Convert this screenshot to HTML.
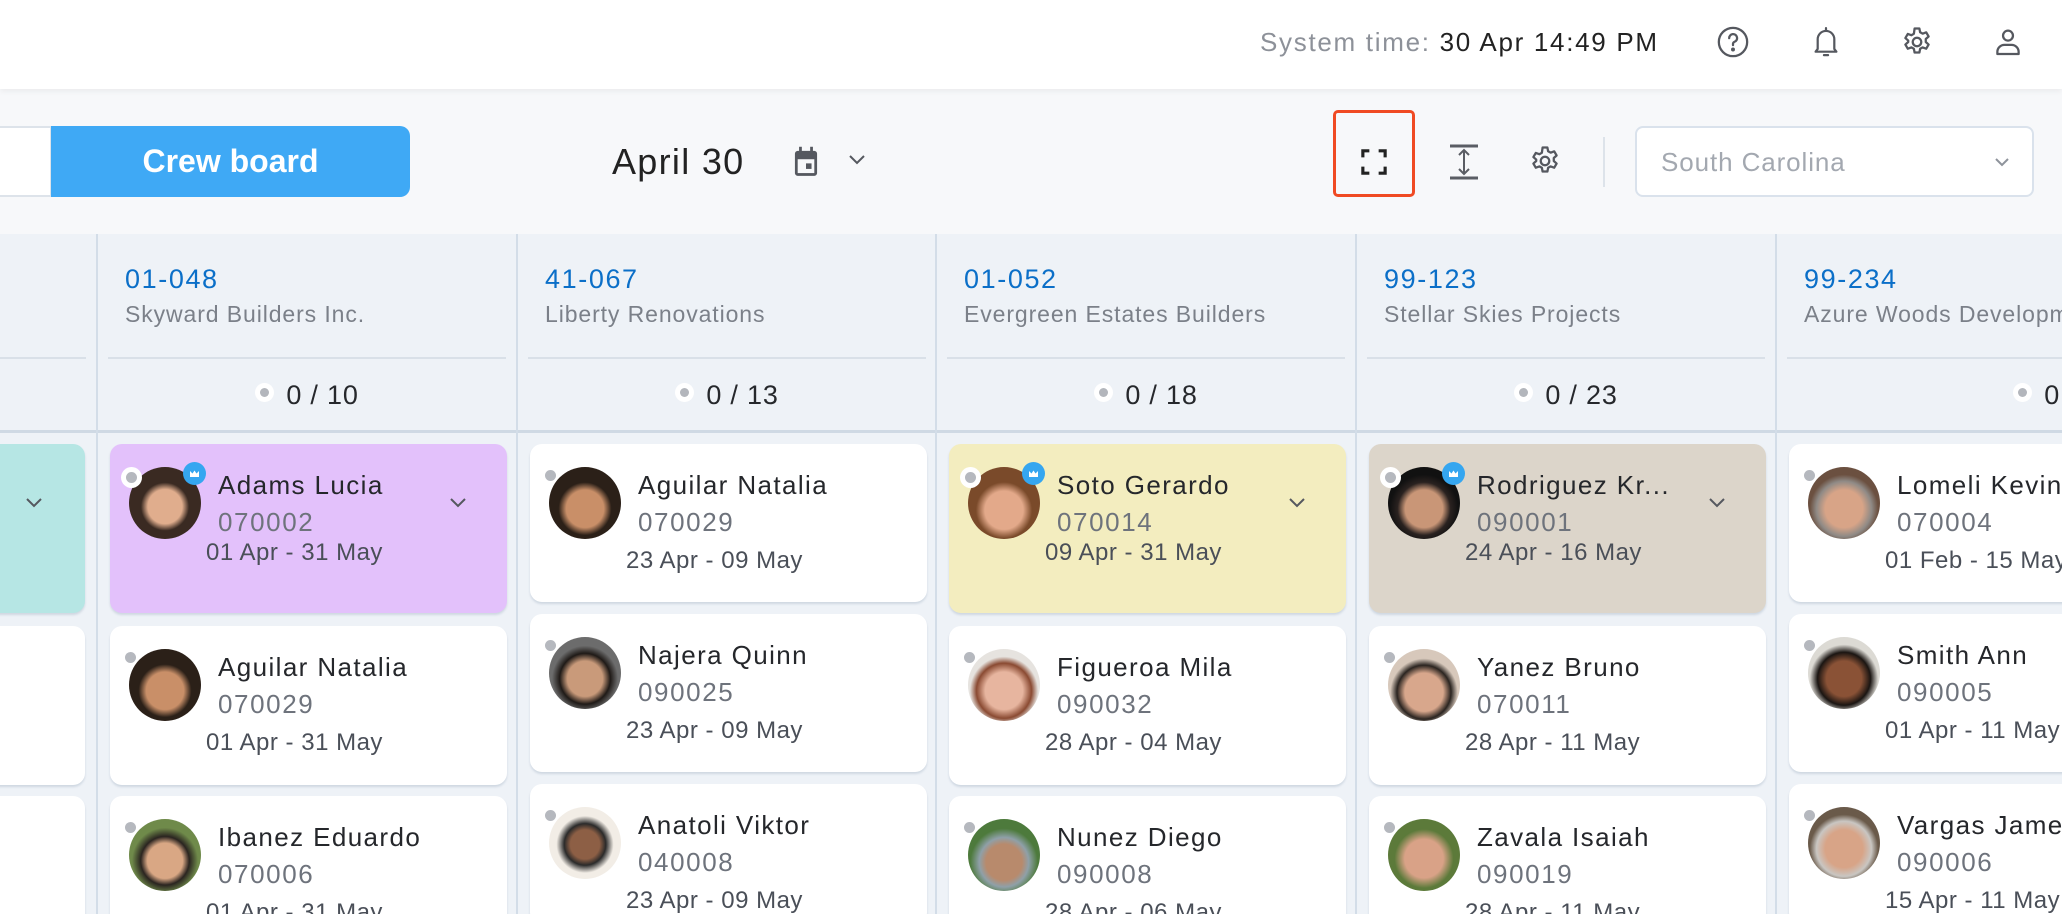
<!DOCTYPE html>
<html style="width:2062px;height:914px;overflow:hidden"><head><meta charset="utf-8">
<style>
*{box-sizing:border-box;margin:0;padding:0}
body{width:2062px;height:914px;overflow:hidden;background:#eef2f7;font-family:"Liberation Sans",Arial,sans-serif}
#root{position:relative;width:2062px;height:914px;overflow:hidden;background:#eef2f7}
.abs{position:absolute}
#top{left:0;top:0;width:2062px;height:89px;background:#fff;box-shadow:0 2px 6px rgba(0,0,0,.06);z-index:3}
#tb{left:0;top:89px;width:2062px;height:145px;background:#f7f8fa}
.col{position:absolute;top:234px;width:420px;height:680px;border-left:2px solid #d3dde8;overflow:hidden}
.code{position:absolute;left:27px;top:30px;font-size:27px;color:#0b6fc8;line-height:30px;letter-spacing:1.6px}
.comp{position:absolute;left:27px;top:66px;font-size:23px;color:#7b8089;line-height:28px;white-space:nowrap;letter-spacing:.9px}
.hl{position:absolute;left:10px;right:10px;top:123px;height:2px;background:#d9e0e8}
.cnt{position:absolute;left:0;right:0;top:146px;text-align:center;font-size:27px;color:#26282c;line-height:30px;letter-spacing:.8px}
.cnt i{display:inline-block;width:19px;height:19px;border-radius:50%;background:#fff;vertical-align:2px;margin-right:12px;position:relative}
.cnt i:after{content:"";position:absolute;left:5px;top:5px;width:9px;height:9px;border-radius:50%;background:#b3b6bc}
.hb{position:absolute;left:0;width:2062px;height:3px;background:#cfd9e4}
.card{position:absolute;left:12px;width:397px;border-radius:12px;background:#fff;box-shadow:0 2px 2px rgba(150,165,185,.35)}
.av{position:absolute;left:19px;top:23px;width:72px;height:72px;border-radius:50%;overflow:hidden}
.sd{position:absolute;left:15px;top:26px;width:11px;height:11px;border-radius:50%;background:#b5b8be;z-index:2}
.sd.w{width:21px;height:21px;left:11px;top:23px;background:#fff}
.sd.w:after{content:"";position:absolute;left:5px;top:5px;width:11px;height:11px;border-radius:50%;background:#b5b8be}
.cr{position:absolute;left:73px;top:18px;width:23px;height:23px;border-radius:50%;background:#35a6f0;z-index:2}
.nm{position:absolute;left:108px;top:26px;font-size:26px;color:#25272b;line-height:30px;white-space:nowrap;letter-spacing:1.4px}
.id{position:absolute;left:108px;top:63px;font-size:26px;color:#6e737c;line-height:30px;letter-spacing:1.6px}
.dt{position:absolute;left:96px;top:95px;font-size:24px;color:#4a4f58;line-height:28px;white-space:nowrap;letter-spacing:.5px}
.card.n .dt{top:103px}
.chev{position:absolute;left:338px;top:52px}
</style></head><body><div id="root">

<div id="top" class="abs">
  <div class="abs" style="left:1260px;top:27px;font-size:26px;line-height:30px;white-space:nowrap;letter-spacing:1.7px"><span style="color:#8d9199">System time:</span> <span style="color:#222">30 Apr 14:49 PM</span></div>
  <svg class="abs" style="left:1716px;top:25px" width="34" height="34" viewBox="0 0 24 24" fill="none" stroke="#55585f" stroke-width="1.6"><circle cx="12" cy="12" r="10"/><path d="M9.3 9.3a2.8 2.8 0 1 1 3.7 2.6c-.7.3-1 .8-1 1.5v.8" stroke-linecap="round"/><circle cx="12" cy="17.3" r=".6" fill="#55585f"/></svg>
  <svg class="abs" style="left:1809px;top:24px" width="34" height="36" viewBox="0 0 24 26" fill="none" stroke="#55585f" stroke-width="1.6"><path d="M6 18V11a6 6 0 0 1 12 0v7l1.5 2h-15z" stroke-linejoin="round"/><path d="M12 3v2M10.5 22.5h3" stroke-linecap="round"/></svg>
  <svg class="abs" style="left:1900px;top:25px" width="34" height="34" viewBox="0 0 24 24" fill="none" stroke="#55585f" stroke-width="1.6"><path d="M10.3 2.5h3.4l.5 2.6 1.8 1 2.5-.9 1.7 2.9-2 1.8v2.1l2 1.8-1.7 2.9-2.5-.9-1.8 1-.5 2.6h-3.4l-.5-2.6-1.8-1-2.5.9-1.7-2.9 2-1.8V11l-2-1.8 1.7-2.9 2.5.9 1.8-1z" stroke-linejoin="round"/><circle cx="12" cy="12" r="3"/></svg>
  <svg class="abs" style="left:1991px;top:25px" width="34" height="34" viewBox="0 0 24 24" fill="none" stroke="#55585f" stroke-width="1.6"><circle cx="12" cy="7.5" r="3.5"/><path d="M4.5 20.5v-1.5a5 5 0 0 1 5-5h5a5 5 0 0 1 5 5v1.5z" stroke-linejoin="round"/></svg>
</div>

<div id="tb" class="abs">
  <div class="abs" style="left:-10px;top:37px;width:62px;height:71px;background:#fff;border:2px solid #dde3ea"></div>
  <div class="abs" style="left:51px;top:37px;width:359px;height:71px;background:#3fa9f5;border-radius:0 10px 10px 0;color:#fff;font-weight:bold;font-size:32px;line-height:71px;text-align:center">Crew board</div>
  <div class="abs" style="left:612px;top:53px;font-size:36px;color:#222;line-height:40px;letter-spacing:1.3px">April 30</div>
  <svg class="abs" style="left:789px;top:55px" width="34" height="36" viewBox="0 0 24 26" fill="#55585f"><rect x="4" y="5" width="16" height="18" rx="2"/><rect x="7" y="2" width="2" height="5"/><rect x="15" y="2" width="2" height="5"/><rect x="6" y="11" width="12" height="10" fill="#f7f8fa"/><rect x="12" y="14" width="4" height="4"/></svg>
  <svg class="abs" style="left:847px;top:64px" width="20" height="14" viewBox="0 0 20 14" fill="none" stroke="#55585f" stroke-width="2"><path d="M3 3l7 7 7-7"/></svg>
  <div class="abs" style="left:1333px;top:21px;width:82px;height:87px;border:3px solid #f04a23;border-radius:5px"></div>
  <svg class="abs" style="left:1361px;top:60px" width="26" height="26" viewBox="0 0 28 28" fill="none" stroke="#222" stroke-width="3.4"><path d="M2 9V2h7M19 2h7v7M26 19v7h-7M9 26H2v-7"/></svg>
  <svg class="abs" style="left:1448px;top:55px" width="32" height="36" viewBox="0 0 32 36" fill="none" stroke="#5a5d64" stroke-width="3"><path d="M2 2h28M2 34h28"/><path d="M16 7v22" stroke-width="2"/><path d="M11 11l5-5 5 5M11 25l5 5 5-5" stroke-width="2"/></svg>
  <svg class="abs" style="left:1528px;top:55px" width="34" height="34" viewBox="0 0 24 24" fill="none" stroke="#55585f" stroke-width="1.6"><path d="M10.3 2.5h3.4l.5 2.6 1.8 1 2.5-.9 1.7 2.9-2 1.8v2.1l2 1.8-1.7 2.9-2.5-.9-1.8 1-.5 2.6h-3.4l-.5-2.6-1.8-1-2.5.9-1.7-2.9 2-1.8V11l-2-1.8 1.7-2.9 2.5.9 1.8-1z" stroke-linejoin="round"/><circle cx="12" cy="12" r="3"/></svg>
  <div class="abs" style="left:1603px;top:48px;width:2px;height:50px;background:#dde3ea"></div>
  <div class="abs" style="left:1635px;top:37px;width:399px;height:71px;background:#fff;border:2px solid #dae2ec;border-radius:8px">
    <div class="abs" style="left:24px;top:18px;font-size:26px;color:#a3a8b0;line-height:32px;letter-spacing:.9px">South Carolina</div>
    <svg class="abs" style="left:356px;top:28px" width="18" height="12" viewBox="0 0 18 12" fill="none" stroke="#8e939b" stroke-width="2"><path d="M3 3l6 6 6-6"/></svg>
  </div>
</div>

<div class="hb" style="top:430px"></div>

<div class="col" style="left:-324px;border-left:none">
  <div class="hl"></div>
  <div class="card" style="top:210px;height:169px;background:#b6e6e4"></div>
  <svg class="chev" style="left:348px;top:262px" width="20" height="14" viewBox="0 0 20 14" fill="none" stroke="#55585f" stroke-width="2"><path d="M3 3l7 7 7-7"/></svg>
  <div class="card" style="top:392px;height:159px"></div>
  <div class="card" style="top:562px;height:130px"></div>
</div>

<div class="col" style="left:96px">
  <div class="code">01-048</div><div class="comp">Skyward Builders Inc.</div><div class="hl"></div>
  <div class="cnt"><i></i>0 / 10</div>
  <div class="card" style="top:210px;height:169px;background:#e3c1fb">
    <div class="sd w"></div><div class="cr"><svg width="23" height="23" viewBox="0 0 23 23"><path d="M7 15h9V9l-2.5 2.5-2-3-2 3L7 9z" fill="#fff"/></svg></div>
    <div class="av" style="background:radial-gradient(circle at 50% 55%,#e0ad8d 0 32%,#3a2a22 45%)"></div>
    <div class="nm">Adams Lucia</div><div class="id">070002</div><div class="dt">01 Apr - 31 May</div>
    <svg class="chev" width="20" height="14" viewBox="0 0 20 14" fill="none" stroke="#55585f" stroke-width="2"><path d="M3 3l7 7 7-7"/></svg>
  </div>
  <div class="card n" style="top:392px;height:159px">
    <div class="sd"></div><div class="av" style="background:radial-gradient(circle at 50% 58%,#c98f68 0 34%,#2b2018 48%)"></div>
    <div class="nm">Aguilar Natalia</div><div class="id">070029</div><div class="dt">01 Apr - 31 May</div>
  </div>
  <div class="card n" style="top:562px;height:130px">
    <div class="sd"></div><div class="av" style="background:radial-gradient(circle at 50% 58%,#d9a784 0 32%,#2a2420 44%,#6f8a4a 60%)"></div>
    <div class="nm">Ibanez Eduardo</div><div class="id">070006</div><div class="dt">01 Apr - 31 May</div>
  </div>
</div>

<div class="col" style="left:516px">
  <div class="code">41-067</div><div class="comp">Liberty Renovations</div><div class="hl"></div>
  <div class="cnt"><i></i>0 / 13</div>
  <div class="card n" style="top:210px;height:158px">
    <div class="sd"></div><div class="av" style="background:radial-gradient(circle at 50% 58%,#c98f68 0 34%,#2b2018 48%)"></div>
    <div class="nm">Aguilar Natalia</div><div class="id">070029</div><div class="dt">23 Apr - 09 May</div>
  </div>
  <div class="card n" style="top:380px;height:158px">
    <div class="sd"></div><div class="av" style="background:radial-gradient(circle at 50% 58%,#c99a7a 0 32%,#1f1a17 46%,#6c6c6c 60%)"></div>
    <div class="nm">Najera Quinn</div><div class="id">090025</div><div class="dt">23 Apr - 09 May</div>
  </div>
  <div class="card n" style="top:550px;height:140px">
    <div class="sd"></div><div class="av" style="background:radial-gradient(circle at 50% 52%,#8d5f45 0 28%,#2a2a2a 40%,#f2ede6 55%)"></div>
    <div class="nm">Anatoli Viktor</div><div class="id">040008</div><div class="dt">23 Apr - 09 May</div>
  </div>
</div>

<div class="col" style="left:935px">
  <div class="code">01-052</div><div class="comp">Evergreen Estates Builders</div><div class="hl"></div>
  <div class="cnt"><i></i>0 / 18</div>
  <div class="card" style="top:210px;height:169px;background:#f3edbf">
    <div class="sd w"></div><div class="cr"><svg width="23" height="23" viewBox="0 0 23 23"><path d="M7 15h9V9l-2.5 2.5-2-3-2 3L7 9z" fill="#fff"/></svg></div>
    <div class="av" style="background:radial-gradient(circle at 50% 60%,#e3a98a 0 34%,#7a4a2a 50%)"></div>
    <div class="nm">Soto Gerardo</div><div class="id">070014</div><div class="dt">09 Apr - 31 May</div>
    <svg class="chev" width="20" height="14" viewBox="0 0 20 14" fill="none" stroke="#55585f" stroke-width="2"><path d="M3 3l7 7 7-7"/></svg>
  </div>
  <div class="card n" style="top:392px;height:159px">
    <div class="sd"></div><div class="av" style="background:radial-gradient(circle at 50% 58%,#e7b59f 0 34%,#8a4a32 50%,#e6e3df 62%)"></div>
    <div class="nm">Figueroa Mila</div><div class="id">090032</div><div class="dt">28 Apr - 04 May</div>
  </div>
  <div class="card n" style="top:562px;height:130px">
    <div class="sd"></div><div class="av" style="background:radial-gradient(circle at 50% 60%,#b88a6c 0 32%,#8fa0a8 44%,#4d7a3c 60%)"></div>
    <div class="nm">Nunez Diego</div><div class="id">090008</div><div class="dt">28 Apr - 06 May</div>
  </div>
</div>

<div class="col" style="left:1355px">
  <div class="code">99-123</div><div class="comp">Stellar Skies Projects</div><div class="hl"></div>
  <div class="cnt"><i></i>0 / 23</div>
  <div class="card" style="top:210px;height:169px;background:#dcd5ca">
    <div class="sd w"></div><div class="cr"><svg width="23" height="23" viewBox="0 0 23 23"><path d="M7 15h9V9l-2.5 2.5-2-3-2 3L7 9z" fill="#fff"/></svg></div>
    <div class="av" style="background:radial-gradient(circle at 50% 58%,#c99677 0 34%,#2a2220 48%,#111 62%)"></div>
    <div class="nm">Rodriguez Kr...</div><div class="id">090001</div><div class="dt">24 Apr - 16 May</div>
    <svg class="chev" width="20" height="14" viewBox="0 0 20 14" fill="none" stroke="#55585f" stroke-width="2"><path d="M3 3l7 7 7-7"/></svg>
  </div>
  <div class="card n" style="top:392px;height:159px">
    <div class="sd"></div><div class="av" style="background:radial-gradient(circle at 50% 60%,#d8a78c 0 34%,#2a2420 48%,#d7c8bb 60%)"></div>
    <div class="nm">Yanez Bruno</div><div class="id">070011</div><div class="dt">28 Apr - 11 May</div>
  </div>
  <div class="card n" style="top:562px;height:130px">
    <div class="sd"></div><div class="av" style="background:radial-gradient(circle at 50% 55%,#d9a287 0 36%,#5c7a3a 55%)"></div>
    <div class="nm">Zavala Isaiah</div><div class="id">090019</div><div class="dt">28 Apr - 11 May</div>
  </div>
</div>

<div class="col" style="left:1775px;width:287px">
  <div class="code">99-234</div><div class="comp">Azure Woods Development</div><div class="hl" style="right:0"></div>
  <div class="cnt" style="left:0;right:auto;width:560px"><i></i>0 / 3</div>
  <div class="card n" style="top:210px;height:158px">
    <div class="sd"></div><div class="av" style="background:radial-gradient(circle at 50% 58%,#d8a487 0 34%,#8f8a86 50%,#6b5040 62%)"></div>
    <div class="nm">Lomeli Kevin</div><div class="id">070004</div><div class="dt">01 Feb - 15 May</div>
  </div>
  <div class="card n" style="top:380px;height:158px">
    <div class="sd"></div><div class="av" style="background:radial-gradient(circle at 50% 58%,#8a5236 0 32%,#1a1512 48%,#dcdad4 62%)"></div>
    <div class="nm">Smith Ann</div><div class="id">090005</div><div class="dt">01 Apr - 11 May</div>
  </div>
  <div class="card n" style="top:550px;height:140px">
    <div class="sd"></div><div class="av" style="background:radial-gradient(circle at 50% 58%,#d8a487 0 34%,#c9c6c2 50%,#6a5a4a 62%)"></div>
    <div class="nm">Vargas James</div><div class="id">090006</div><div class="dt">15 Apr - 11 May</div>
  </div>
</div>

</div></body></html>
